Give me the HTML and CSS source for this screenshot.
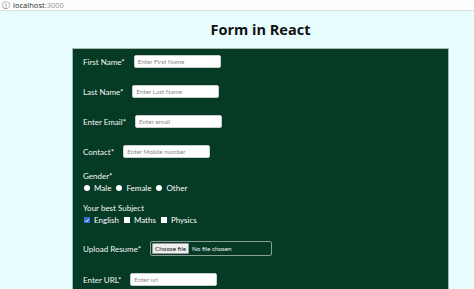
FILE: index.html
```html
<!DOCTYPE html>
<html>
<head>
<meta charset="utf-8">
<link rel="stylesheet" href="styles.css">
</head>
<body>
<div class="urlbar"><span class="info">ⓘ</span><span class="host">localhost</span><span class="port">:3000</span></div>
<div class="page">
  <h1 class="title">Form in React</h1>
  <form class="form">
    <div class="row r1"><label class="lbl">First Name*</label><input class="txt" placeholder="Enter First Name"></div>
    <div class="row r2"><label class="lbl">Last Name*</label><input class="txt" placeholder="Enter Last Name"></div>
    <div class="row r3"><label class="lbl">Enter Email*</label><input class="txt" placeholder="Enter email"></div>
    <div class="row r4"><label class="lbl">Contact*</label><input class="txt" placeholder="Enter Mobile number"></div>
    <div class="block gender">
      <div class="lbl">Gender*</div>
      <div class="opts">
        <span class="radio"></span><span class="opt">Male</span>
        <span class="radio"></span><span class="opt">Female</span>
        <span class="radio"></span><span class="opt">Other</span>
      </div>
    </div>
    <div class="block subject">
      <div class="lbl">Your best Subject</div>
      <div class="opts">
        <span class="check on"><svg viewBox="0 0 8 8" width="7" height="7"><path d="M1.6 4.2 L3.2 5.8 L6.4 2.2" fill="none" stroke="#fff" stroke-width="1.3"/></svg></span><span class="opt">English</span>
        <span class="check"></span><span class="opt">Maths</span>
        <span class="check"></span><span class="opt">Physics</span>
      </div>
    </div>
    <div class="row r5"><label class="lbl">Upload Resume*</label>
      <div class="file"><span class="choose">Choose file</span><span class="nofile">No file chosen</span></div>
    </div>
    <div class="row r6"><label class="lbl">Enter URL*</label><input class="txt" placeholder="Enter url"></div>
  </form>
</div>
</body>
</html>
```
FILE: styles.css
```css
* { box-sizing: border-box; }
html, body { margin: 0; padding: 0; }
body {
  width: 474px;
  height: 289px;
  overflow: hidden;
  background: #e8fdfd;
  font-family: "Lato", "Open Sans", sans-serif;
}
.urlbar {
  height: 11px;
  background: #fdfefe;
  border-bottom: 1px solid #d8e2e2;
  display: flex;
  align-items: center;
  padding-left: 2px;
  overflow: hidden;
  font-family: "Noto Sans", sans-serif;
  font-size: 7.5px;
  line-height: 10px;
  color: #555;
}
.urlbar .info { margin-right: 3px; color: #666; }
.urlbar .host { color: #333; }
.urlbar .port { color: #999; }
.page {
  padding-left: 72px;
  width: 449px;
}
.title {
  margin: 0;
  height: 37px;
  padding-top: 10px;
  text-align: center;
  font-family: "Open Sans", "Lato", sans-serif;
  font-weight: 700;
  font-size: 14.5px;
  line-height: 18px;
  color: #111;
}
.form {
  background: #053a25;
  border: 1px solid #a9b8b4;
  border-bottom: none;
  height: 241px;
  padding: 6px 10px 0 10px;
  color: #fff;
}
.lbl {
  font-size: 8px;
  line-height: 10px;
  color: #f4f7f5;
  white-space: nowrap;
}
.row {
  display: flex;
  align-items: center;
  gap: 9px;
  height: 13px;
}
.r2, .r3, .r4 { margin-top: 17px; }
.txt {
  width: 87px;
  height: 12.5px;
  border: 1px solid #c9cfcc;
  border-radius: 2px;
  background: #fff;
  padding: 0 3px;
  font-family: "Lato", sans-serif;
  font-size: 6.3px;
  outline: none;
}
.txt::placeholder { color: #8a8a8a; }
.block { display: flex; flex-direction: column; }
.gender { margin-top: 13px; }
.subject { margin-top: 10px; }
.opts {
  display: flex;
  align-items: center;
  margin-top: 2px;
  height: 10px;
}
.radio {
  width: 6px;
  height: 6px;
  border-radius: 50%;
  background: #fff;
  margin-left: 1px;
  margin-right: 4px;
}
.check {
  width: 6px;
  height: 6px;
  background: #fff;
  margin-left: 1px;
  margin-right: 4px;
  display: flex;
  align-items: center;
  justify-content: center;
}
.check.on { background: #2f6fd6; }
.check svg { display: block; }
.opt {
  font-size: 8px;
  line-height: 10px;
  margin-right: 4px;
}
.r5 { margin-top: 16px; height: 15px; }
.file {
  width: 122px;
  height: 15px;
  border: 1px solid #8a9e96;
  border-radius: 2px;
  display: flex;
  align-items: center;
  padding-left: 1px;
  gap: 3px;
}
.choose {
  background: #efefef;
  color: #111;
  border: 1px solid #999;
  border-radius: 1px;
  font-size: 6.3px;
  line-height: 9px;
  padding: 0 2px;
}
.nofile {
  font-size: 6.3px;
  color: #f2f2f2;
}
.r6 { margin-top: 17px; }
```
